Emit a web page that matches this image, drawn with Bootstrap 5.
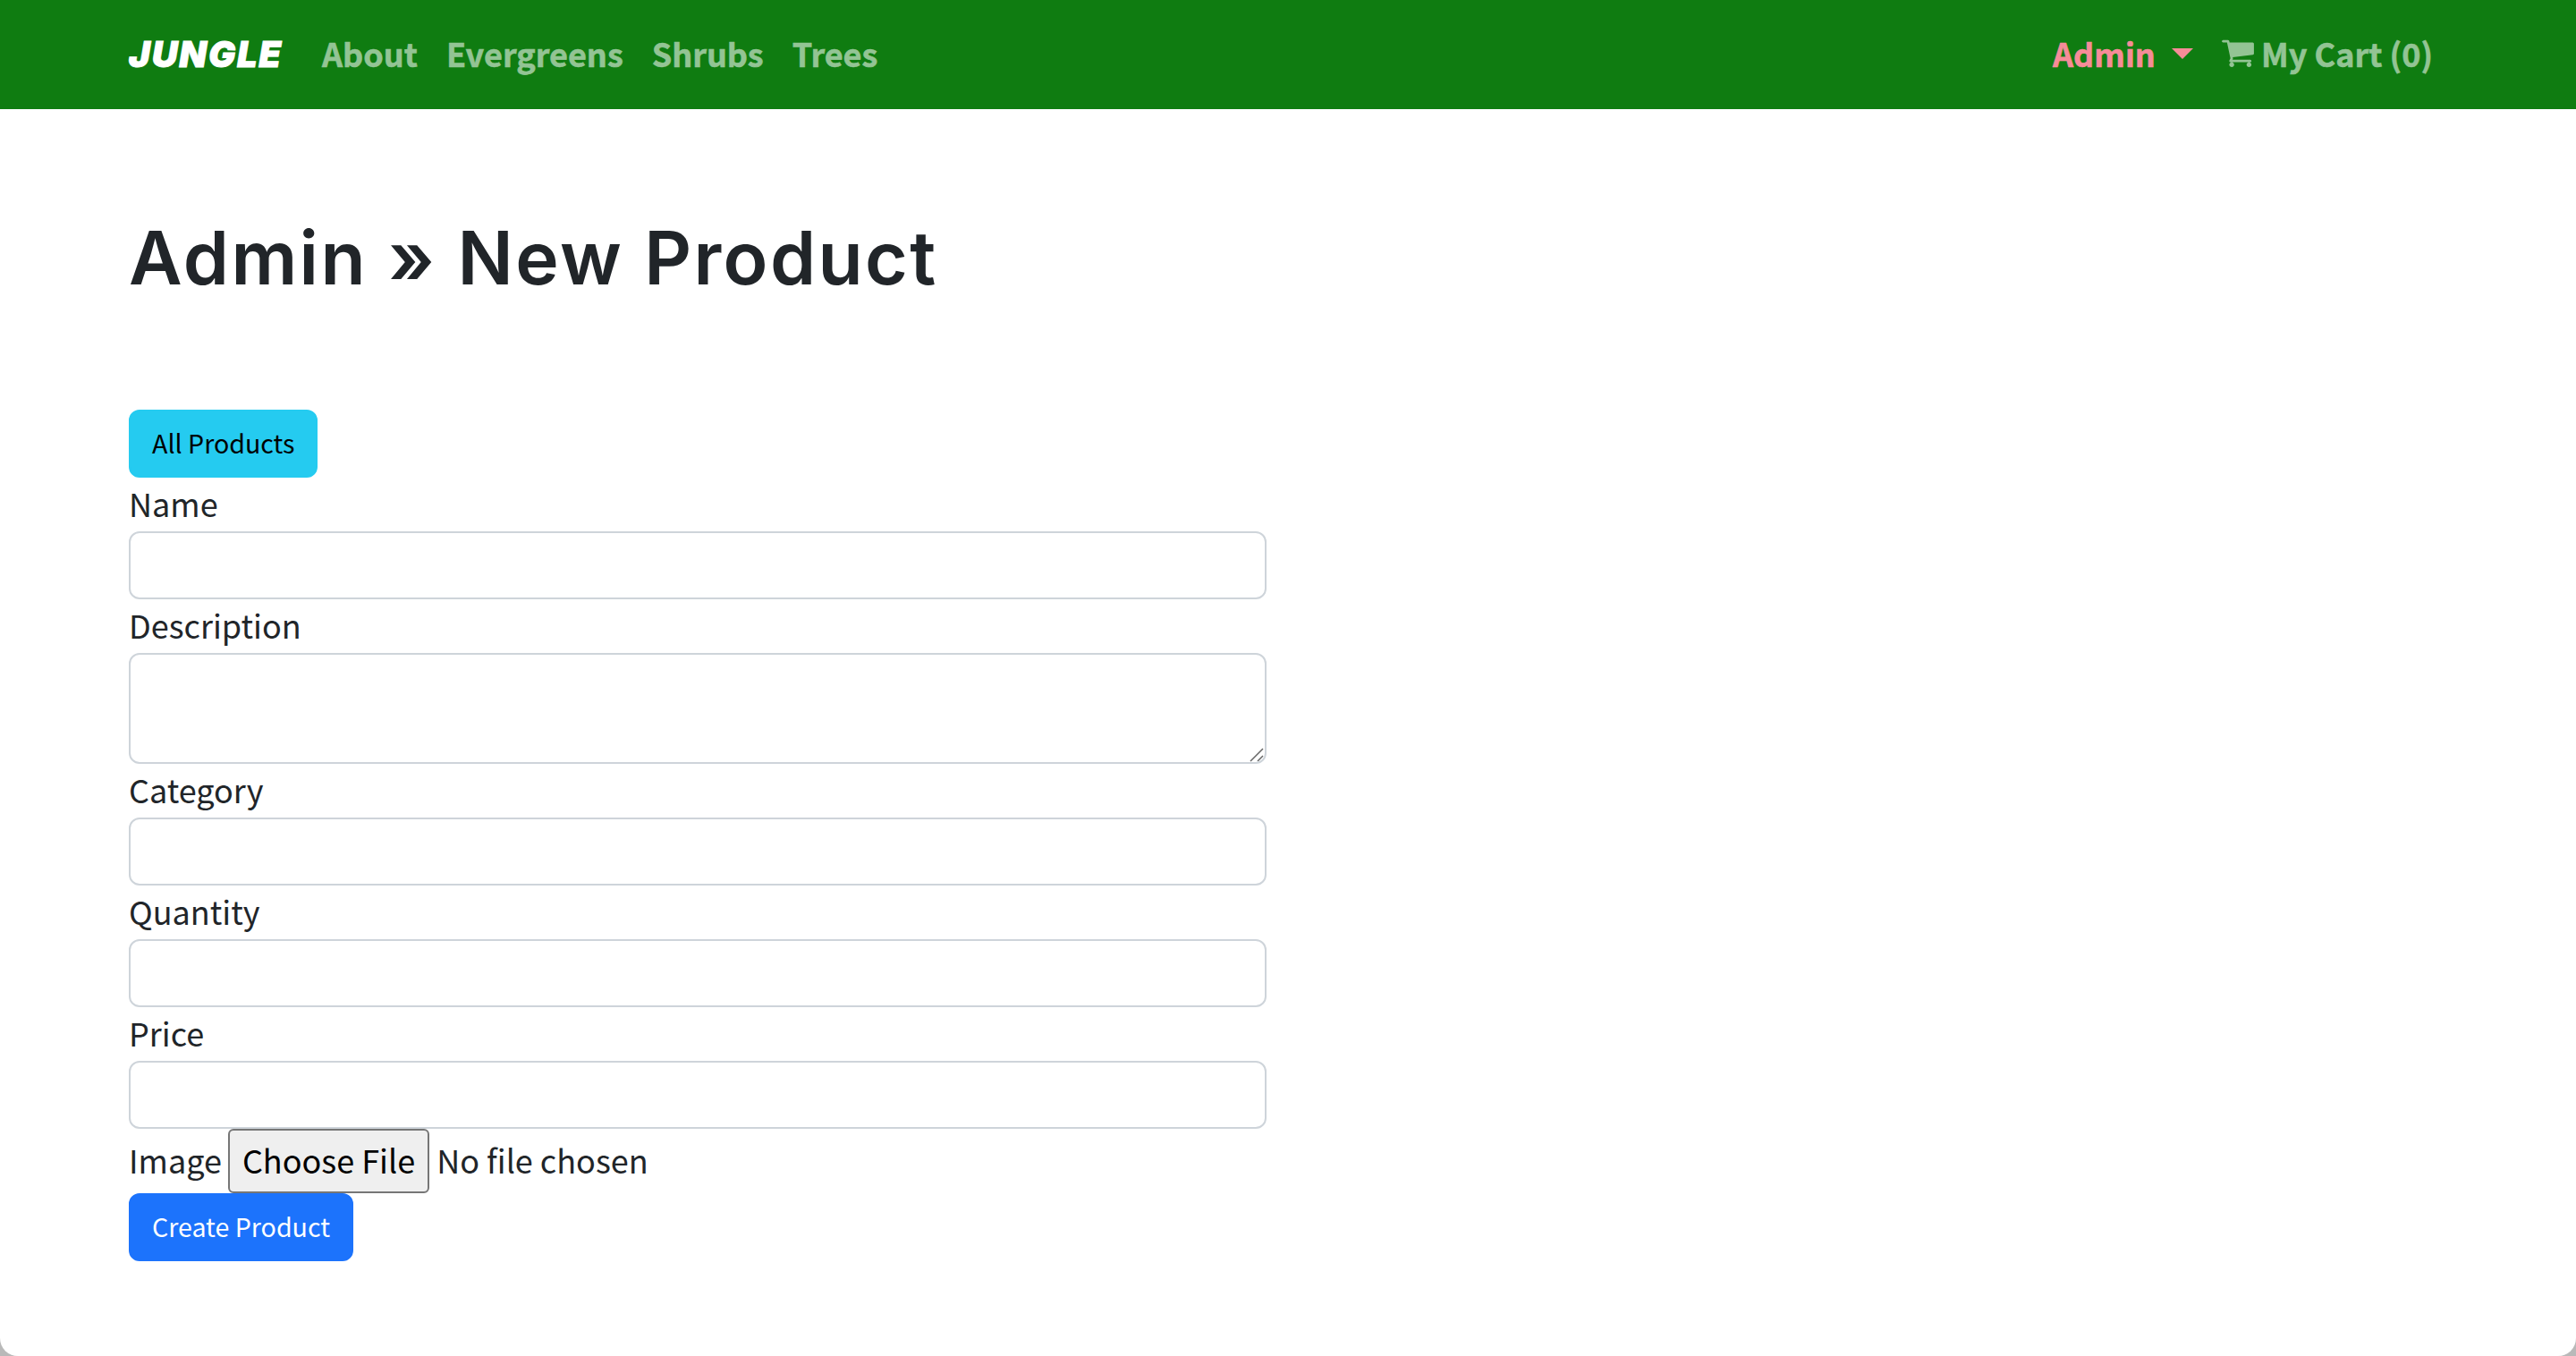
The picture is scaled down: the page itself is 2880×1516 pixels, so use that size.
<!DOCTYPE html>
<html lang="en">
<head>
<meta charset="utf-8">
<title>Jungle</title>
<link href="https://cdn.jsdelivr.net/npm/bootstrap@5.3.0/dist/css/bootstrap.min.css" rel="stylesheet">
<style>
html{font-size:32px;background:#b9b9b9;}
body{--bs-border-width:2px;--bs-border-color:#ced4da;font-family:"Noto Sans CJK SC","Noto Sans",sans-serif;font-size:36px;min-height:100vh;border-radius:0 0 20px 20px;overflow:hidden;}
.jungle-bar{background:#0f7c11;padding:0 5%;height:122px;}
.jungle-bar .container-fluid{padding:0;}
.jungle-bar .navbar-brand{font-family:Inter,sans-serif;font-weight:900;font-style:italic;font-size:40px;color:#fff;letter-spacing:1.8px;line-height:1;margin-right:28px;-webkit-text-stroke:.8px #fff;}
.jungle-bar .nav-link{font-size:36px;font-weight:700;color:#93c494;-webkit-text-stroke:.6px currentColor;padding-top:14px;padding-bottom:18px;}
.jungle-bar .nav-link.admin-link{color:#f68c98;}
.jungle-bar .dropdown-toggle::after{margin-left:18px;border-width:12px 12px 0;}
.cart-glyph{width:36px;height:38.6px;fill:currentColor;vertical-align:-6px;}
.page-body{padding:0 5%;}
.page-title{font-family:Inter,sans-serif;font-weight:600;font-size:82px;letter-spacing:2.4px;line-height:96px;margin:119px 0 121px;color:#212529;}
.field-label{display:block;line-height:56px;padding-bottom:4px;}
.form-control{height:76px;}
textarea.form-control{height:124px;resize:none;background-image:url("data:image/svg+xml,%3Csvg xmlns='http://www.w3.org/2000/svg' width='18' height='18'%3E%3Cpath d='M2 17 16 3M10 17l6-6' stroke='%23666' stroke-width='1.5' fill='none'/%3E%3C/svg%3E");background-repeat:no-repeat;background-position:right bottom;}
.file-row{line-height:72px;height:72px;display:flex;align-items:center;}
.file-row label{margin-right:7px;position:relative;bottom:2px;}
.file-row input::file-selector-button{font-family:inherit;font-size:36px;line-height:36px;height:72px;padding:0 14px 4px;margin-right:8px;border:2px solid #767676;border-radius:6px;background:#efefef;color:#000;}
.file-row input{font-size:36px;color:#212529;margin-top:-2px;}
.new-form{width:1272px;}
.page-body .btn{--bs-btn-font-size:28.6px;--bs-btn-line-height:48px;--bs-btn-padding-x:24px;--bs-btn-padding-y:12px;padding-top:11px;padding-bottom:13px;}
.btn-info{--bs-btn-bg:#25cbf0;--bs-btn-border-color:#25cbf0;}
.btn-primary{--bs-btn-bg:#1c73fc;--bs-btn-border-color:#1c73fc;}
</style>
</head>
<body>
<nav class="navbar navbar-expand-lg jungle-bar">
  <div class="container-fluid">
    <a class="navbar-brand" href="#">JUNGLE</a>
    <div class="collapse navbar-collapse">
      <ul class="navbar-nav me-auto">
        <li class="nav-item"><a class="nav-link" href="#">About</a></li>
        <li class="nav-item"><a class="nav-link" href="#">Evergreens</a></li>
        <li class="nav-item"><a class="nav-link" href="#">Shrubs</a></li>
        <li class="nav-item"><a class="nav-link" href="#">Trees</a></li>
      </ul>
      <ul class="navbar-nav">
        <li class="nav-item dropdown"><a class="nav-link dropdown-toggle admin-link" href="#">Admin</a></li>
        <li class="nav-item"><a class="nav-link" href="#"><svg class="cart-glyph" viewBox="0 0 1664 1792"><path d="M640 1408q0 52-38 90t-90 38-90-38-38-90 38-90 90-38 90 38 38 90zm896 0q0 52-38 90t-90 38-90-38-38-90 38-90 90-38 90 38 38 90zm128-1088v512q0 24-16.5 42.5t-40.5 21.5l-1044 122q13 60 13 70 0 16-24 64h920q26 0 45 19t19 45-19 45-45 19h-1024q-26 0-45-19t-19-45q0-11 8-31.5t16-36 21.5-40 15.5-29.5l-177-823h-204q-26 0-45-19t-19-45 19-45 45-19h256q16 0 28.5 6.5t19.5 15.5 13 24.5 8 26 5.5 29.5 4.5 26h1201q26 0 45 19t19 45z"/></svg> My Cart (0)</a></li>
      </ul>
    </div>
  </div>
</nav>
<main class="page-body">
  <h1 class="page-title">Admin » New Product</h1>
  <a class="btn btn-info" href="#">All Products</a>
  <form class="new-form">
    <label class="field-label" for="pn">Name</label>
    <input class="form-control" id="pn" type="text">
    <label class="field-label" for="pd">Description</label>
    <textarea class="form-control" id="pd" rows="2"></textarea>
    <label class="field-label" for="pc">Category</label>
    <input class="form-control" id="pc" type="text">
    <label class="field-label" for="pq">Quantity</label>
    <input class="form-control" id="pq" type="text">
    <label class="field-label" for="pp">Price</label>
    <input class="form-control" id="pp" type="text">
    <div class="file-row"><label for="pi">Image</label><input id="pi" type="file"></div>
    <button class="btn btn-primary" type="submit">Create Product</button>
  </form>
</main>
<script src="https://cdn.jsdelivr.net/npm/bootstrap@5.3.0/dist/js/bootstrap.bundle.min.js"></script>
</body>
</html>
